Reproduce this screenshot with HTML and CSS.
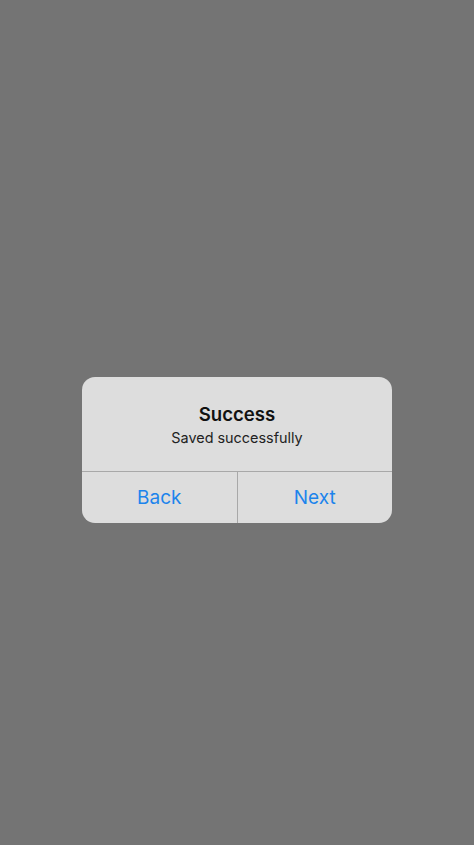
FILE: index.html
```html
<!DOCTYPE html>
<html lang="en">
<head>
<meta charset="utf-8">
<title>Alert</title>
<link rel="stylesheet" href="styles.css">
</head>
<body>
<div class="screen">
  <div class="alert" role="alertdialog">
    <div class="alert-body">
      <div class="alert-title">Success</div>
      <div class="alert-message">Saved successfully</div>
    </div>
    <div class="alert-actions">
      <button class="alert-btn">Back</button>
      <button class="alert-btn">Next</button>
    </div>
  </div>
</div>
</body>
</html>
```

FILE: styles.css
```css
html, body {
  margin: 0;
  padding: 0;
  height: 100%;
  background: #747474;
}
.screen {
  height: 845px;
  display: flex;
  justify-content: center;
  align-items: flex-start;
  padding-top: 377px;
  box-sizing: border-box;
  font-family: Inter, "Noto Sans", sans-serif;
}
.alert {
  width: 310px;
  background: #dddddd;
  border-radius: 13px;
  overflow: hidden;
}
.alert-body {
  height: 95px;
  box-sizing: border-box;
  padding-top: 26px;
  display: flex;
  flex-direction: column;
  align-items: center;
  border-bottom: 1px solid #a8a8a8;
}
.alert-title {
  font-size: 18.6px;
  font-weight: 600;
  color: #111;
  line-height: 22px;
}
.alert-message {
  font-size: 14.4px;
  color: #222;
  line-height: 18px;
  margin-top: 4px;
}
.alert-actions {
  display: flex;
  height: 51px;
}
.alert-btn {
  flex: 1;
  border: 0;
  background: transparent;
  font-family: inherit;
  font-size: 19px;
  color: #1c84ec;
  padding: 0 0 1px;
}
.alert-btn + .alert-btn {
  border-left: 1px solid #a8a8a8;
}
```
